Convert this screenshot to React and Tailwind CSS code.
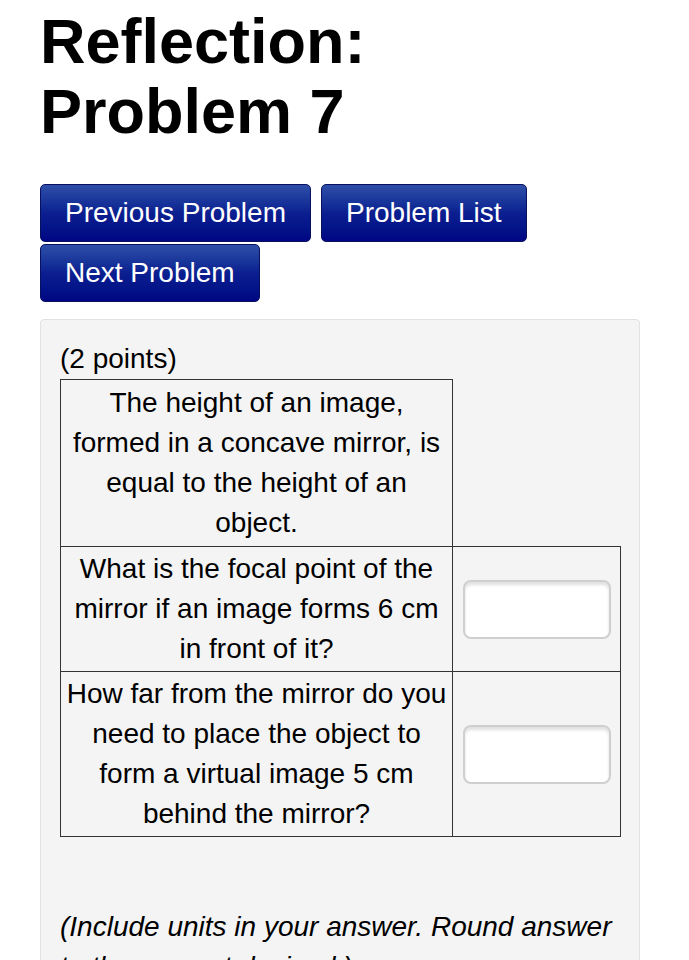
import React from 'react';

const rows = [
  {
    text: 'What is the focal point of the mirror if an image forms 6 cm in front of it?',
  },
  {
    text: 'How far from the mirror do you need to place the object to form a virtual image 5 cm behind the mirror?',
  },
];

const NavButton = ({ children }) => (
  <button
    type="button"
    className="rounded-[5px] border border-[#08115e] bg-gradient-to-b from-[#2f4ea8] via-[#0c1f90] to-[#000583] px-6 py-2 text-[28px] leading-[40px] text-white"
  >
    {children}
  </button>
);

export default function App() {
  return (
    <div
      className="min-h-screen bg-white pl-[40px] pr-[49px] pt-[6px] text-black"
      style={{ fontFamily: '"Liberation Sans", Arial, Helvetica, sans-serif' }}
    >
      <h1 className="text-[63px] font-bold leading-[70px]">
        Reflection:
        <br />
        Problem 7
      </h1>

      <div className="mt-[38px] flex flex-wrap gap-x-[10px] gap-y-[2px]">
        <NavButton>Previous Problem</NavButton>
        <NavButton>Problem List</NavButton>
        <NavButton>Next Problem</NavButton>
      </div>

      <div className="mt-[17px] h-[700px] rounded-[4px] border border-[#e2e2e2] bg-[#f4f4f4] px-[19px] pt-[19px] text-[28px] leading-[40px]">
        <div>(2 points)</div>
        <table className="w-[560px] table-fixed border-collapse">
          <colgroup>
            <col className="w-[392px]" />
            <col className="w-[168px]" />
          </colgroup>
          <tbody>
            <tr>
              <td className="border border-[#333] px-[2px] py-[3px] text-center">
                The height of an image, formed in a concave mirror, is equal to the height of an
                object.
              </td>
              <td className="p-0"></td>
            </tr>
            {rows.map((row) => (
              <tr key={row.text}>
                <td className="border border-[#333] px-[2px] py-[2px] text-center">{row.text}</td>
                <td className="border border-[#333] px-[10px] py-0 align-middle">
                  <input
                    type="text"
                    className="block h-[59px] w-[148px] rounded-[8px] border-2 border-[#cfcfcf] bg-white shadow-[inset_0_3px_3px_rgba(0,0,0,0.12)] outline-none"
                  />
                </td>
              </tr>
            ))}
          </tbody>
        </table>

        <p className="mt-[70px] italic">
          (Include units in your answer. Round answer to the nearest decimal.)
        </p>
      </div>
    </div>
  );
}
